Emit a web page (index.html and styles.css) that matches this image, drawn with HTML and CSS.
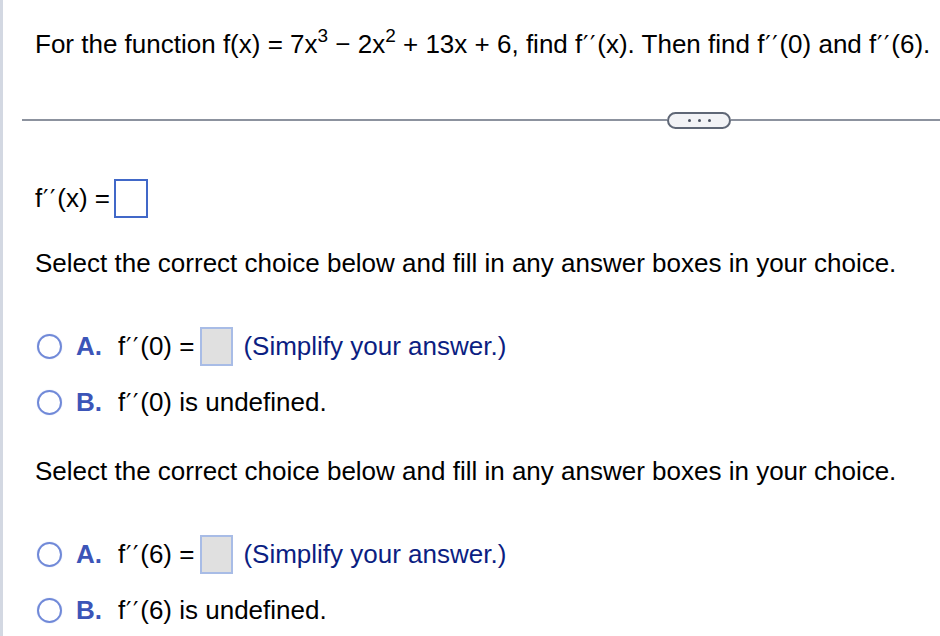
FILE: index.html
```html
<!DOCTYPE html>
<html>
<head>
<meta charset="utf-8">
<link rel="stylesheet" href="styles.css">
</head>
<body>
<div class="page">
  <p class="title">For the function <span class="m">f(x) = 7x<sup>3</sup> − 2x<sup>2</sup> + 13x + 6</span>, find <span class="m">f<span class="pr">′</span><span class="pr">′</span>(x)</span>. Then find <span class="m">f<span class="pr">′</span><span class="pr">′</span>(0)</span> and <span class="m">f<span class="pr">′</span><span class="pr">′</span>(6)</span>.</p>

  <div class="divider">
    <div class="line"></div>
    <div class="pill"><span class="dot"></span><span class="dot"></span><span class="dot"></span></div>
    <div class="line tail"></div>
  </div>

  <div class="answer-row">
    <span class="m">f<span class="pr">′</span><span class="pr">′</span>(x) =</span><span class="box blue"></span>
  </div>

  <p class="prompt">Select the correct choice below and fill in any answer boxes in your choice.</p>

  <div class="choices">
    <div class="choice">
      <span class="radio"></span><span class="letter">A.</span>
      <span class="m">f<span class="pr">′</span><span class="pr">′</span>(0) =</span><span class="box gray"></span><span class="hint">(Simplify your answer.)</span>
    </div>
    <div class="choice">
      <span class="radio"></span><span class="letter">B.</span>
      <span class="m">f<span class="pr">′</span><span class="pr">′</span>(0)</span>&nbsp;is undefined.
    </div>
  </div>

  <p class="prompt">Select the correct choice below and fill in any answer boxes in your choice.</p>

  <div class="choices">
    <div class="choice">
      <span class="radio"></span><span class="letter">A.</span>
      <span class="m">f<span class="pr">′</span><span class="pr">′</span>(6) =</span><span class="box gray"></span><span class="hint">(Simplify your answer.)</span>
    </div>
    <div class="choice">
      <span class="radio"></span><span class="letter">B.</span>
      <span class="m">f<span class="pr">′</span><span class="pr">′</span>(6)</span>&nbsp;is undefined.
    </div>
  </div>
</div>
</body>
</html>
```

FILE: styles.css
```css
html, body {
  margin: 0;
  padding: 0;
  background: #ffffff;
}
body {
  font-family: "Liberation Sans", Arial, sans-serif;
  color: #000;
  font-size: 26px;
}
.page {
  border-left: 3px solid #d3d8e2;
  min-height: 636px;
  box-sizing: border-box;
  padding-top: 30px;
}
.title {
  margin: 0;
  padding-left: 32px;
  line-height: 28px;
  white-space: nowrap;
}
.pr {
  display: inline-block;
  font-family: "DejaVu Sans", sans-serif;
  font-size: 24px;
  line-height: 1;
  width: 7px;
  text-align: center;
}
.pr + .pr {
  margin-right: 1px;
}
sup {
  font-size: 19px;
  line-height: 0;
  vertical-align: 11px;
}
.divider {
  display: flex;
  align-items: center;
  margin: 53px 0 0 19px;
  height: 18px;
}
.line {
  flex: 1;
  height: 2px;
  background: #8c929e;
}
.line.tail {
  flex: 0 0 209px;
}
.pill {
  box-sizing: border-box;
  width: 64px;
  height: 17px;
  border: 2px solid #5f6776;
  border-radius: 9px;
  background: #f2f3f6;
  display: flex;
  align-items: center;
  justify-content: center;
  gap: 7px;
}
.dot {
  width: 3px;
  height: 3px;
  border-radius: 50%;
  background: #4a5160;
}
.answer-row {
  display: flex;
  align-items: center;
  padding-left: 32px;
  margin-top: 50px;
  height: 39px;
}
.answer-row .m {
  margin-right: 4px;
}
.box {
  display: inline-block;
  box-sizing: border-box;
  width: 34px;
  height: 39px;
}
.box.blue {
  border: 2px solid #4168c8;
  background: #fff;
}
.box.gray {
  width: 33px;
  border: 2px solid #a8bce6;
  background: #e0e0e0;
  margin-left: 6px;
}
.prompt {
  margin: 31px 0 0;
  padding-left: 32px;
  line-height: 28px;
  white-space: nowrap;
}
.choices {
  margin-top: 50px;
  padding-left: 34px;
  display: flex;
  flex-direction: column;
  gap: 17px;
}
.choices + .prompt {
  margin-top: 35px;
}
.choice {
  display: flex;
  align-items: center;
  height: 39px;
}
.radio {
  box-sizing: border-box;
  width: 25px;
  height: 25px;
  border-radius: 50%;
  border: 2.5px solid #7089d8;
  box-shadow: 0 0 1px #a8b8ea;
  margin-right: 14px;
}
.letter {
  font-weight: bold;
  color: #3c55b8;
  width: 42px;
}
.hint {
  color: #0b1e82;
  margin-left: 10px;
}
```
